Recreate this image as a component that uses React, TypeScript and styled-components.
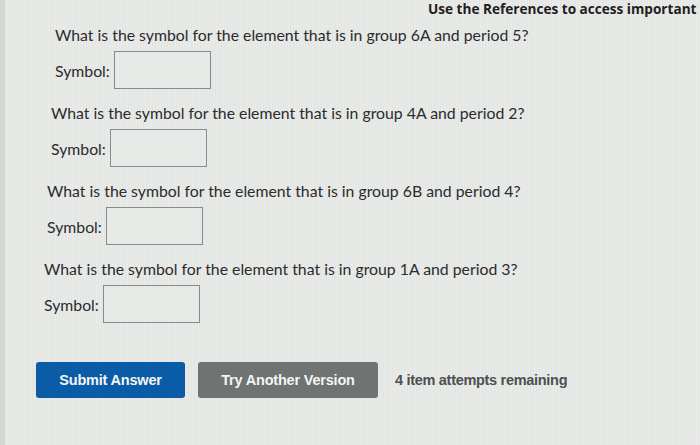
import React from "react";
import styled, { createGlobalStyle } from "styled-components";

const Global = createGlobalStyle`
  html, body {
    margin: 0;
    padding: 0;
    overflow: hidden;
    background: #e7e9e7;
  }
  body {
    font-family: Lato, "Open Sans", sans-serif;
  }
`;

const Page = styled.div`
  width: 700px;
  height: 445px;
  box-sizing: border-box;
  border-left: 5px solid #d5d7d5;
  background-color: #e8eae8;
  background-image: repeating-linear-gradient(
    90deg,
    rgba(0, 0, 0, 0.025) 0px,
    rgba(0, 0, 0, 0.025) 1px,
    transparent 1px,
    transparent 3px
  );
  display: flex;
  flex-direction: column;
  overflow: hidden;
`;

const Header = styled.div`
  padding-left: 423px;
  height: 16px;
  line-height: 17px;
  font-family: "Open Sans", Lato, sans-serif;
  font-weight: 700;
  font-size: 13.6px;
  color: #1f2021;
  white-space: nowrap;
`;

const Questions = styled.div`
  display: flex;
  flex-direction: column;
  gap: 14px;
  margin-top: 9px;
`;

const Block = styled.div<{ $indent: number }>`
  display: flex;
  flex-direction: column;
  gap: 6px;
  padding-left: ${(p) => p.$indent}px;
`;

const Prompt = styled.div`
  font-size: 15.8px;
  line-height: 20px;
  color: #2b2c2d;
  white-space: nowrap;
`;

const Row = styled.div`
  display: flex;
  align-items: center;
  gap: 5px;
`;

const Label = styled.span`
  font-size: 15.8px;
  color: #2b2c2d;
  width: 54px;
`;

const AnswerBox = styled.div`
  width: 97px;
  height: 38px;
  box-sizing: border-box;
  border: 1px solid #868a88;
  background: rgba(255, 255, 255, 0.08);
`;

const Actions = styled.div`
  display: flex;
  align-items: center;
  gap: 13px;
  margin-top: 39px;
  padding-left: 31px;
`;

const Button = styled.button<{ $variant: "primary" | "secondary"; $w: number }>`
  width: ${(p) => p.$w}px;
  height: 36px;
  border: none;
  border-radius: 3px;
  background: ${(p) => (p.$variant === "primary" ? "#0b5ca6" : "#6f7371")};
  color: #f4f6f5;
  font-family: "Liberation Sans", Arial, sans-serif;
  font-weight: 700;
  font-size: 14.5px;
  letter-spacing: -0.2px;
  padding: 0;
  cursor: pointer;
`;

const Remaining = styled.span`
  margin-left: 4px;
  font-family: "Liberation Sans", Arial, sans-serif;
  font-weight: 700;
  font-size: 14.5px;
  letter-spacing: -0.3px;
  color: #4c504e;
`;

const questions = [
  { text: "What is the symbol for the element that is in group 6A and period 5?", indent: 50 },
  { text: "What is the symbol for the element that is in group 4A and period 2?", indent: 46 },
  { text: "What is the symbol for the element that is in group 6B and period 4?", indent: 42 },
  { text: "What is the symbol for the element that is in group 1A and period 3?", indent: 39 },
];

export default function App() {
  return (
    <Page>
      <Global />
      <Header>Use the References to access important</Header>
      <Questions>
        {questions.map((q) => (
          <Block key={q.text} $indent={q.indent}>
            <Prompt>{q.text}</Prompt>
            <Row>
              <Label>Symbol:</Label>
              <AnswerBox />
            </Row>
          </Block>
        ))}
      </Questions>
      <Actions>
        <Button $variant="primary" $w={149}>Submit Answer</Button>
        <Button $variant="secondary" $w={180}>Try Another Version</Button>
        <Remaining>4 item attempts remaining</Remaining>
      </Actions>
    </Page>
  );
}
